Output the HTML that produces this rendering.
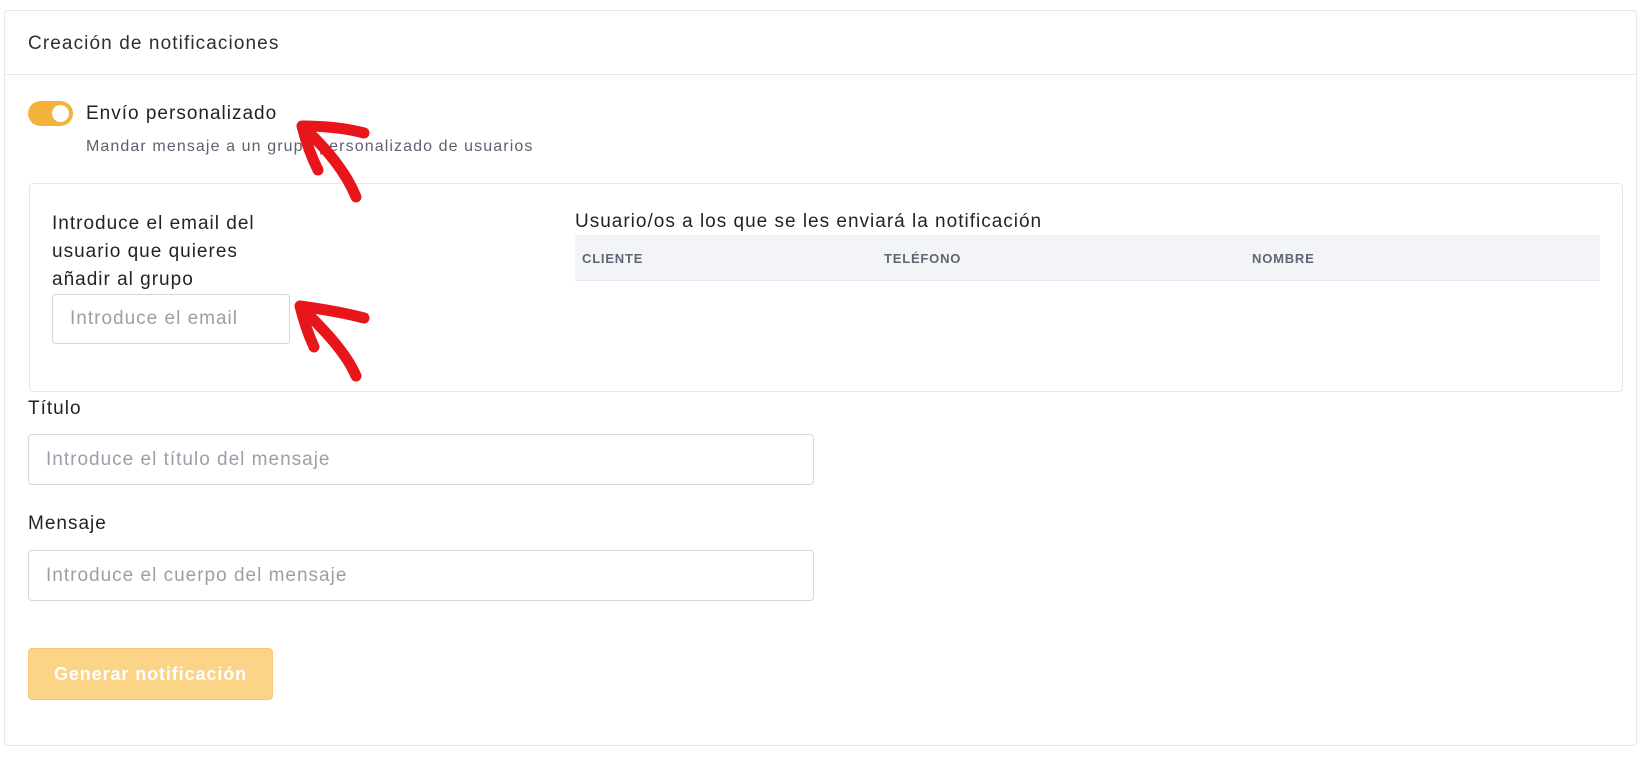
<!DOCTYPE html>
<html><head><meta charset="utf-8"><style>
*{box-sizing:border-box;margin:0;padding:0}
body{width:1640px;height:759px;background:#fff;font-family:"Liberation Sans",sans-serif;color:#1f2937;position:relative;overflow:hidden}
.abs{position:absolute}
.card{left:4px;top:10px;width:1633px;height:736px;border:1px solid #e3e6ec;border-radius:4px;background:#fff}
.hdr{left:4px;top:74px;width:1633px;height:1px;background:#e6e8ee}
.t{white-space:nowrap;line-height:1}
.inp{border:1px solid #d4d7dd;border-radius:4px;background:#fff;color:#9aa0aa;font-size:19px;letter-spacing:1px;display:flex;align-items:center;padding-left:17px}
</style></head><body>
<div class="abs card"></div>
<div class="abs hdr"></div>
<div class="abs t" style="left:28px;top:34px;font-size:19px;letter-spacing:1.1px;color:#2b2f36">Creación de notificaciones</div>
<div class="abs" style="left:28px;top:101px;width:45px;height:25px;border-radius:13px;background:#f3b23c"></div>
<div class="abs" style="left:52px;top:105px;width:17px;height:17px;border-radius:50%;background:#fff"></div>
<div class="abs t" style="left:86px;top:104px;font-size:19px;letter-spacing:1px;color:#1f2329">Envío personalizado</div>
<div class="abs t" style="left:86px;top:139px;font-size:16px;letter-spacing:1.1px;color:#5b6270">Mandar mensaje a un grupo personalizado de usuarios</div>
<div class="abs" style="left:29px;top:183px;width:1594px;height:209px;border:1px solid #e3e6ec;border-radius:4px"></div>
<div class="abs" style="left:52px;top:210px;font-size:19px;letter-spacing:1px;line-height:28px;color:#1f2329">Introduce el email del<br>usuario que quieres<br>añadir al grupo</div>
<div class="abs inp" style="left:52px;top:294px;width:238px;height:50px">Introduce el email</div>
<div class="abs t" style="left:575px;top:212px;font-size:19px;letter-spacing:1px;color:#1f2329">Usuario/os a los que se les enviará la notificación</div>
<div class="abs" style="left:575px;top:235px;width:1025px;height:46px;background:#f3f4f7;border-bottom:1px solid #e6e8ee"></div>
<div class="abs t" style="left:582px;top:252px;font-size:13px;font-weight:bold;color:#5f6673;letter-spacing:.8px">CLIENTE</div>
<div class="abs t" style="left:884px;top:252px;font-size:13px;font-weight:bold;color:#5f6673;letter-spacing:.8px">TELÉFONO</div>
<div class="abs t" style="left:1252px;top:252px;font-size:13px;font-weight:bold;color:#5f6673;letter-spacing:.8px">NOMBRE</div>
<div class="abs t" style="left:28px;top:399px;font-size:19px;letter-spacing:1px;color:#1f2329">Título</div>
<div class="abs inp" style="left:28px;top:434px;width:786px;height:51px">Introduce el título del mensaje</div>
<div class="abs t" style="left:28px;top:514px;font-size:19px;letter-spacing:1px;color:#1f2329">Mensaje</div>
<div class="abs inp" style="left:28px;top:550px;width:786px;height:51px">Introduce el cuerpo del mensaje</div>
<div class="abs" style="left:28px;top:648px;width:245px;height:52px;background:#fbd487;border:1px solid #f5c977;border-radius:4px;color:#fff;font-weight:bold;font-size:18px;letter-spacing:.9px;display:flex;align-items:center;justify-content:center">Generar notificación</div>
<svg class="abs" style="left:0;top:0" width="1640" height="759">
<g fill="none" stroke="#e8151b" stroke-width="11" stroke-linecap="round" stroke-linejoin="round">
<path d="M364 133 C345 128 322 126 302 126 M302 126 C306 142 312 158 318 170 M305 129 C326 148 346 172 356 197"/>
<path d="M364 318 C345 313 322 309 300 306 M300 306 C304 322 309 336 314 347 M303 309 C322 328 346 352 356 376"/>
</g></svg>
</body></html>
